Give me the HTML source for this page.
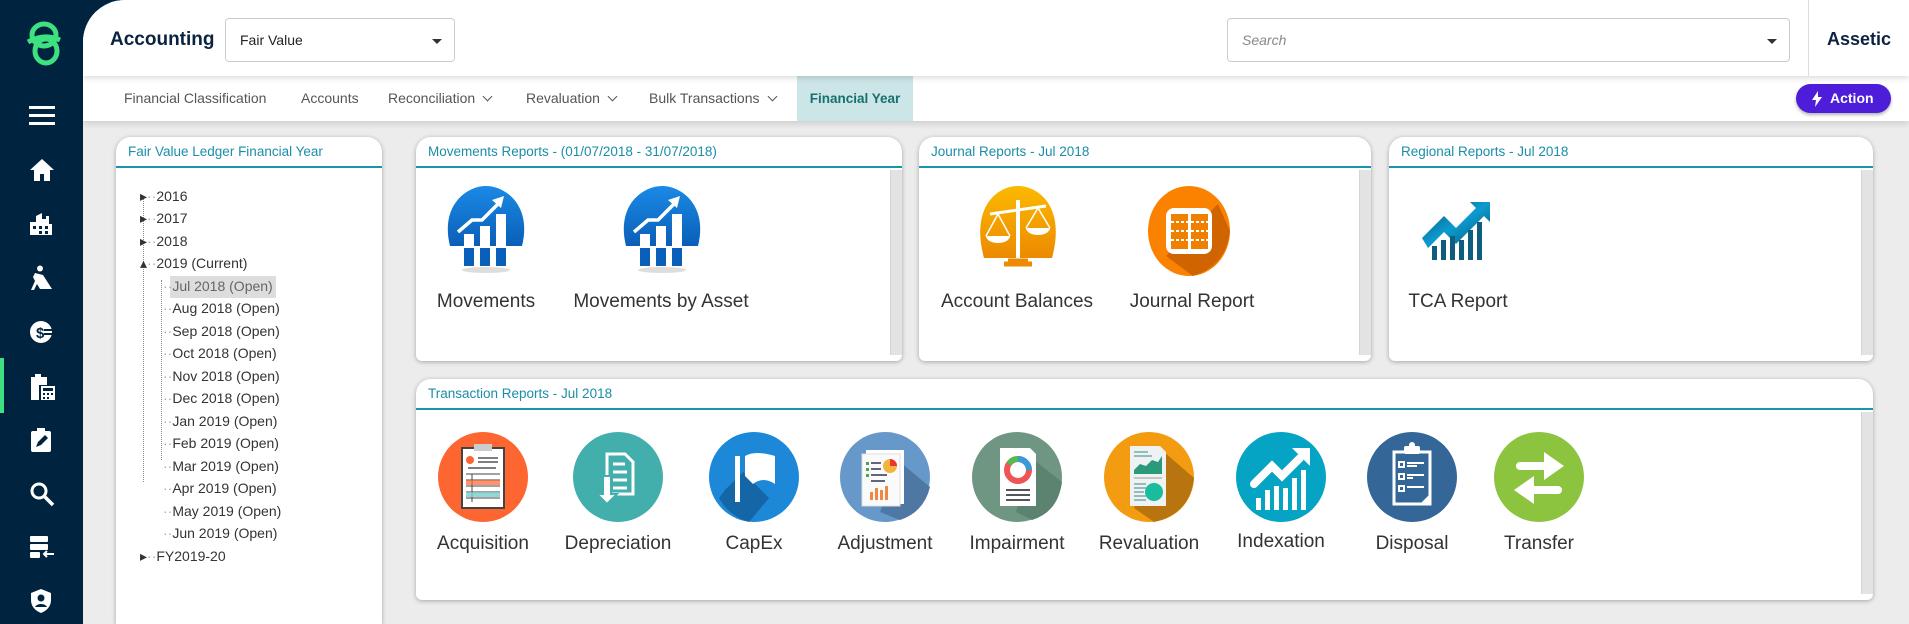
<!DOCTYPE html>
<html style="overflow:hidden;width:1909px;height:624px"><head><meta charset="utf-8"><style>
*{box-sizing:border-box;margin:0;padding:0}
body{width:1909px;height:624px;overflow:hidden;background:#002440;font-family:"Liberation Sans",sans-serif;position:relative}
.abs{position:absolute}
#main{left:83px;top:0;width:1826px;height:624px;background:#ececec;border-top-left-radius:42px;overflow:hidden}
#hdr{left:0;top:0;width:1826px;height:76px;background:#fff;box-shadow:0 2px 6px rgba(0,0,0,.15);z-index:2}
#nav{left:0;top:76px;width:1826px;height:45px;background:#fff;box-shadow:0 3px 6px rgba(0,0,0,.12);z-index:1}
.nv{position:absolute;top:0;height:45px;line-height:45px;font-size:14px;color:#555}
.chev{display:inline-block;width:7px;height:7px;border-right:1.6px solid #555;border-bottom:1.6px solid #555;transform:rotate(45deg);margin-left:9px;position:relative;top:-3px}
.panel{position:absolute;background:#fff;border-radius:15px 15px 6px 6px;box-shadow:0 1px 5px rgba(0,0,0,.3)}
.ph{height:31px;border-bottom:2px solid #1a93ab;color:#1a8ea9;font-size:13.5px;line-height:30px;padding-left:12px}
.lbl{position:absolute;font-size:19px;color:#333;white-space:nowrap;transform:translateX(-50%)}
.ic{position:absolute}
.tr{position:absolute;font-size:14px;color:#333;white-space:nowrap}
.sb{position:absolute;right:0;top:33px;width:12px;background:#e3e3e3;border-left:1px solid #d4d4d4}
</style></head><body>
<!-- sidebar -->
<svg class="abs" style="left:24px;top:20px" width="40" height="48" viewBox="0 0 40 48"><g fill="none" stroke="#3ee07f" stroke-width="5"><ellipse cx="20" cy="15" rx="12" ry="11"/><ellipse cx="22" cy="31" rx="11" ry="12"/><path d="M4 22 Q20 13 36 20"/></g></svg>
<div class="abs" style="left:29px;top:106px;width:26px;height:3px;background:#fff;box-shadow:0 8px 0 #fff,0 16px 0 #fff"></div>
<svg class="abs" style="left:29px;top:158px" width="26" height="24" viewBox="0 0 26 24"><path d="M13 1L1 12h4v11h6v-7h4v7h6V12h4z" fill="#fff"/></svg>
<svg class="abs" style="left:29px;top:212px" width="24" height="24" viewBox="0 0 24 24"><path d="M1 23V10h6V4l6-3v6h4V4h3v8h3v11z" fill="#fff"/><g fill="#002440"><rect x="4" y="14" width="3" height="3"/><rect x="10" y="14" width="3" height="3"/><rect x="16" y="14" width="3" height="3"/><rect x="10" y="19" width="3" height="3"/><rect x="16" y="19" width="3" height="3"/></g></svg>
<svg class="abs" style="left:28px;top:265px" width="26" height="26" viewBox="0 0 26 26"><circle cx="12" cy="3.5" r="3" fill="#fff"/><path d="M7 8l8 2 9 14H12l-3-5-3 6H3l4-9L5 12z" fill="#fff"/></svg>
<svg class="abs" style="left:29px;top:320px" width="24" height="24" viewBox="0 0 24 24"><circle cx="12" cy="12" r="11" fill="#fff"/><text x="7" y="18" font-size="15" font-weight="bold" fill="#002440" font-family="Liberation Sans">$</text><path d="M15 10h8M15 14h8" stroke="#002440" stroke-width="2"/></svg>
<div class="abs" style="left:0;top:358px;width:4px;height:55px;background:#3ee07f"></div>
<svg class="abs" style="left:30px;top:373px" width="26" height="28" viewBox="0 0 26 28"><path d="M1 4h16v8H9v15H1z" fill="#fff"/><rect x="5" y="1" width="6" height="4" fill="#fff"/><rect x="11" y="13" width="14" height="14" fill="#fff"/><g fill="#002440"><rect x="13" y="15" width="10" height="3"/><rect x="13" y="20" width="2" height="2"/><rect x="17" y="20" width="2" height="2"/><rect x="21" y="20" width="2" height="2"/><rect x="13" y="24" width="2" height="2"/><rect x="17" y="24" width="2" height="2"/></g></svg>
<svg class="abs" style="left:30px;top:427px" width="22" height="26" viewBox="0 0 22 26"><rect x="1" y="4" width="20" height="21" rx="2" fill="#fff"/><rect x="7" y="1" width="8" height="5" fill="#fff"/><path d="M6 20l2-5 7-7 3 3-7 7z" fill="#002440"/></svg>
<svg class="abs" style="left:29px;top:481px" width="26" height="26" viewBox="0 0 26 26"><circle cx="10" cy="10" r="7" fill="none" stroke="#fff" stroke-width="3"/><path d="M15 15l9 9" stroke="#fff" stroke-width="3.5"/></svg>
<svg class="abs" style="left:29px;top:535px" width="26" height="24" viewBox="0 0 26 24"><rect x="1" y="1" width="18" height="6" rx="1" fill="#fff"/><rect x="1" y="9" width="18" height="6" rx="1" fill="#fff"/><rect x="1" y="17" width="10" height="6" rx="1" fill="#fff"/><path d="M25 19H15M18 16l-3 3 3 3" stroke="#fff" stroke-width="2" fill="none"/></svg>
<svg class="abs" style="left:30px;top:588px" width="22" height="26" viewBox="0 0 22 26"><path d="M11 1L1 5v7c0 7 5 11 10 13 5-2 10-6 10-13V5z" fill="#fff"/><circle cx="11" cy="10" r="3.5" fill="#002440"/><path d="M5 19c2-4 10-4 12 0" fill="#002440"/></svg>

<div id="main" class="abs">
<div id="hdr" class="abs">
  <div class="abs" style="left:27px;top:29px;font-size:19px;font-weight:bold;color:#0b2340">Accounting</div>
  <div class="abs" style="left:142px;top:18px;width:230px;height:44px;border:1px solid #ccc;border-radius:4px;font-size:14px;color:#222;padding:13px 14px">Fair Value<span class="abs" style="right:12px;top:20px;border-left:5px solid transparent;border-right:5px solid transparent;border-top:5px solid #333"></span></div>
  <div class="abs" style="left:1144px;top:18px;width:563px;height:44px;border:1px solid #ccc;border-radius:4px;font-size:14px;color:#888;font-style:italic;padding:13px 14px">Search<span class="abs" style="right:12px;top:20px;border-left:5px solid transparent;border-right:5px solid transparent;border-top:5px solid #333"></span></div>
  <div class="abs" style="left:1725px;top:0;width:1px;height:76px;background:#ddd"></div>
  <div class="abs" style="left:1744px;top:29px;font-size:18px;font-weight:bold;color:#0b2340">Assetic</div>
</div>
<div id="nav" class="abs">
  <div class="nv" style="left:41px">Financial Classification</div>
  <div class="nv" style="left:218px">Accounts</div>
  <div class="nv" style="left:305px">Reconciliation<span class="chev"></span></div>
  <div class="nv" style="left:443px">Revaluation<span class="chev"></span></div>
  <div class="nv" style="left:566px">Bulk Transactions<span class="chev"></span></div>
  <div class="nv" style="left:714px;width:116px;background:#cce5e7;color:#17706f;font-weight:bold;text-align:center;font-size:13.5px">Financial Year</div>
  <div class="abs" style="left:1713px;top:8px;width:95px;height:29px;border-radius:15px;background:#4d1dd9;color:#fff;font-weight:bold;font-size:14px;line-height:29px;padding-left:34px;box-shadow:0 2px 3px rgba(0,0,0,.3)">Action<svg class="abs" style="left:16px;top:7px" width="10" height="16" viewBox="0 0 10 16"><path d="M6 0L0 9h4l-1 7 7-10H6z" fill="#fff"/></svg></div>
</div>
</div>

<!-- left tree panel -->
<div class="panel" style="left:116px;top:137px;width:266px;height:487px;border-radius:15px 15px 0 0">
  <div class="ph">Fair Value Ledger Financial Year</div>
  <div class="abs" style="left:27px;top:60px;width:0;height:285px;border-left:1px dotted #888"></div>
  <div class="abs" style="left:45px;top:143px;width:0;height:180px;border-left:1px dotted #888"></div>
</div>
<div class="tr" style="left:140px;top:188px">▸<span style="color:#aaa">··</span>2016</div>
<div class="tr" style="left:140px;top:210px">▸<span style="color:#aaa">··</span>2017</div>
<div class="tr" style="left:140px;top:233px">▸<span style="color:#aaa">··</span>2018</div>
<div class="tr" style="left:140px;top:255px">▴<span style="color:#aaa">··</span>2019 (Current)</div>
<div class="abs" style="left:170px;top:276px;width:106px;height:22px;background:#ddd"></div>
<div class="tr" style="left:163px;top:278px;color:#666"><span style="color:#aaa">··</span>Jul 2018 (Open)</div>
<div class="tr" style="left:163px;top:300px"><span style="color:#aaa">··</span>Aug 2018 (Open)</div>
<div class="tr" style="left:163px;top:323px"><span style="color:#aaa">··</span>Sep 2018 (Open)</div>
<div class="tr" style="left:163px;top:345px"><span style="color:#aaa">··</span>Oct 2018 (Open)</div>
<div class="tr" style="left:163px;top:368px"><span style="color:#aaa">··</span>Nov 2018 (Open)</div>
<div class="tr" style="left:163px;top:390px"><span style="color:#aaa">··</span>Dec 2018 (Open)</div>
<div class="tr" style="left:163px;top:413px"><span style="color:#aaa">··</span>Jan 2019 (Open)</div>
<div class="tr" style="left:163px;top:435px"><span style="color:#aaa">··</span>Feb 2019 (Open)</div>
<div class="tr" style="left:163px;top:458px"><span style="color:#aaa">··</span>Mar 2019 (Open)</div>
<div class="tr" style="left:163px;top:480px"><span style="color:#aaa">··</span>Apr 2019 (Open)</div>
<div class="tr" style="left:163px;top:503px"><span style="color:#aaa">··</span>May 2019 (Open)</div>
<div class="tr" style="left:163px;top:525px"><span style="color:#aaa">··</span>Jun 2019 (Open)</div>
<div class="tr" style="left:140px;top:548px">▸<span style="color:#aaa">··</span>FY2019-20</div>

<!-- top panels -->
<div class="panel" style="left:416px;top:137px;width:486px;height:224px"><div class="ph">Movements Reports - (01/07/2018 - 31/07/2018)</div><div class="sb" style="height:185px"></div></div>
<div class="panel" style="left:919px;top:137px;width:452px;height:224px"><div class="ph">Journal Reports - Jul 2018</div><div class="sb" style="height:185px"></div></div>
<div class="panel" style="left:1389px;top:137px;width:484px;height:224px"><div class="ph">Regional Reports - Jul 2018</div><div class="sb" style="height:185px"></div></div>
<div class="panel" style="left:416px;top:379px;width:1457px;height:221px"><div class="ph">Transaction Reports - Jul 2018</div><div class="sb" style="height:182px"></div></div>

<!-- movements icons -->
<svg class="ic" style="left:446px;top:186px" width="80" height="88" viewBox="0 0 80 88"><defs><linearGradient id="bg1" x1="0" y1="0" x2="0" y2="1"><stop offset="0" stop-color="#1a8ae6"/><stop offset="1" stop-color="#0a5fb8"/></linearGradient></defs><path d="M4 60 C-6 20 20 0 40 0 60 0 86 20 76 60z" fill="url(#bg1)"/><ellipse cx="40" cy="84" rx="24" ry="3" fill="#ddd"/><g fill="#fff"><rect x="18" y="48" width="10" height="14"/><rect x="34" y="40" width="10" height="22"/><rect x="50" y="28" width="10" height="34"/></g><g fill="#0a5fb8"><rect x="18" y="62" width="10" height="18"/><rect x="34" y="62" width="10" height="18"/><rect x="50" y="62" width="10" height="18"/></g><g fill="#fff"><rect x="28" y="62" width="6" height="18"/><rect x="44" y="62" width="6" height="18"/></g><path d="M12 46l14-12h10l16-16" stroke="#fff" stroke-width="3.5" fill="none"/><path d="M46 14l12-4-3 12z" fill="#fff"/></svg>
<svg class="ic" style="left:622px;top:186px" width="80" height="88" viewBox="0 0 80 88"><path d="M4 60 C-6 20 20 0 40 0 60 0 86 20 76 60z" fill="url(#bg1)"/><ellipse cx="40" cy="84" rx="24" ry="3" fill="#ddd"/><g fill="#fff"><rect x="18" y="48" width="10" height="14"/><rect x="34" y="40" width="10" height="22"/><rect x="50" y="28" width="10" height="34"/></g><g fill="#0a5fb8"><rect x="18" y="62" width="10" height="18"/><rect x="34" y="62" width="10" height="18"/><rect x="50" y="62" width="10" height="18"/></g><g fill="#fff"><rect x="28" y="62" width="6" height="18"/><rect x="44" y="62" width="6" height="18"/></g><path d="M12 46l14-12h10l16-16" stroke="#fff" stroke-width="3.5" fill="none"/><path d="M46 14l12-4-3 12z" fill="#fff"/></svg>
<div class="lbl" style="left:486px;top:291px">Movements</div>
<div class="lbl" style="left:661px;top:291px">Movements by Asset</div>
<!-- account balances -->
<svg class="ic" style="left:978px;top:186px" width="80" height="88" viewBox="0 0 80 88"><defs><linearGradient id="og" x1="0" y1="0" x2="0" y2="1"><stop offset="0" stop-color="#fcb900"/><stop offset="1" stop-color="#ec8a00"/></linearGradient></defs><path d="M6 72 C-8 20 20 0 40 0 60 0 88 20 74 72z" fill="url(#og)"/><rect x="38" y="14" width="4" height="60" fill="#fff"/><path d="M12 28l56-8" stroke="#fff" stroke-width="3"/><path d="M8 50a12 7 0 0 0 24 0zM48 42a12 7 0 0 0 24 0z" fill="#fff"/><path d="M20 28l-12 22M20 28l12 22M60 22l-12 20M60 22l12 20" stroke="#fff" stroke-width="1.5"/><path d="M26 78h28" stroke="#ec8a00" stroke-width="5"/><path d="M30 74h20" stroke="#ec8a00" stroke-width="3"/></svg>
<div class="lbl" style="left:1017px;top:291px">Account Balances</div>
<!-- journal report -->
<svg class="ic" style="left:1148px;top:186px" width="82" height="90" viewBox="0 0 82 90"><ellipse cx="41" cy="45" rx="41" ry="45" fill="#fb8200"/><path d="M18 70L70 18 82 45 Q78 80 45 90z" fill="#d06400"/><rect x="18" y="22" width="46" height="46" rx="8" fill="#fff"/><rect x="23" y="28" width="17" height="35" fill="#f08000"/><rect x="43" y="28" width="17" height="35" fill="#f08000"/><g stroke="#fff" stroke-width="2" stroke-dasharray="3 2"><path d="M23 36h37M23 45h37M23 54h37"/></g></svg>
<div class="lbl" style="left:1192px;top:291px">Journal Report</div>
<!-- TCA -->
<svg class="ic" style="left:1418px;top:190px" width="76" height="72" viewBox="0 0 76 72"><defs><linearGradient id="tg" x1="0" y1="0" x2="1" y2="1"><stop offset="0" stop-color="#0a4d6e"/><stop offset=".5" stop-color="#0b9bd0"/><stop offset="1" stop-color="#0a4d6e"/></linearGradient></defs><path d="M4 48l22-22 12 12 20-20-6-6h20v20l-6-6-28 28-12-12-16 16z" fill="url(#tg)"/><g fill="#0e5c7e"><rect x="14" y="56" width="5" height="14"/><rect x="23" y="50" width="5" height="20"/><rect x="32" y="46" width="5" height="24"/><rect x="41" y="50" width="5" height="20"/><rect x="50" y="40" width="5" height="30"/><rect x="59" y="32" width="5" height="38"/></g></svg>
<div class="lbl" style="left:1458px;top:291px">TCA Report</div>

<!-- transaction icons -->
<svg class="ic" style="left:438px;top:432px" width="90" height="90" viewBox="0 0 90 90"><circle cx="45" cy="45" r="45" fill="#fd6531"/><rect x="24" y="16" width="42" height="60" fill="#fff" stroke="#444" stroke-width="2"/><rect x="36" y="12" width="18" height="7" fill="#ccc"/><circle cx="32" cy="28" r="4" fill="#fd6531"/><path d="M40 26h20M40 30h20M30 36h28" stroke="#555" stroke-width="1.5"/><g stroke="#444" stroke-width="1"><path d="M28 42h34M28 48h34M28 54h34M28 60h34M28 66h34M34 42v28"/></g><rect x="28" y="48" width="34" height="5" fill="#fd6531" opacity=".7"/><rect x="28" y="60" width="34" height="5" fill="#7cc" opacity=".8"/></svg>
<svg class="ic" style="left:573px;top:432px" width="90" height="90" viewBox="0 0 90 90"><circle cx="45" cy="45" r="45" fill="#42afad"/><path d="M34 22h18l8 8v32H34z" fill="none" stroke="#fff" stroke-width="3"/><path d="M40 32h12M40 40h14M40 48h14M40 56h14" stroke="#fff" stroke-width="3"/><path d="M30 44v18h-6l10 10 10-10h-6V44z" fill="#fff" stroke="#42afad" stroke-width="2"/></svg>
<svg class="ic" style="left:709px;top:432px" width="90" height="90" viewBox="0 0 90 90"><circle cx="45" cy="45" r="45" fill="#1e88d8"/><path d="M16 58L34 40 60 66 40 90Q20 84 10 66z" fill="#125e9a" opacity=".8"/><rect x="26" y="24" width="5" height="46" fill="#fff"/><path d="M36 24q10-6 30 0v28q-12-8-22 0l-8-8z" fill="#fff"/></svg>
<svg class="ic" style="left:840px;top:432px" width="90" height="90" viewBox="0 0 90 90"><circle cx="45" cy="45" r="45" fill="#6699c9"/><path d="M60 30L90 55 Q84 80 60 88L40 80z" fill="#4f77a3"/><rect x="26" y="18" width="38" height="54" fill="#fff"/><rect x="22" y="22" width="38" height="52" fill="#fafafa" stroke="#ddd"/><circle cx="50" cy="34" r="7" fill="#f2b43a"/><path d="M50 27v7h7a7 7 0 0 0-7-7z" fill="#e33"/><g fill="#4a4"><rect x="26" y="30" width="3" height="3"/><rect x="26" y="36" width="3" height="3"/><rect x="26" y="42" width="3" height="3"/></g><path d="M31 31h10M31 37h10M31 43h16M31 49h14" stroke="#335" stroke-width="1.5"/><g fill="#e84"><rect x="30" y="60" width="3" height="8"/><rect x="35" y="56" width="3" height="12"/><rect x="40" y="58" width="3" height="10"/><rect x="45" y="54" width="3" height="14"/></g></svg>
<svg class="ic" style="left:972px;top:432px" width="90" height="90" viewBox="0 0 90 90"><circle cx="45" cy="45" r="45" fill="#6e9683"/><path d="M62 28L90 50 Q86 80 60 88L44 80z" fill="#5c8270"/><path d="M28 16h30l6 6v52H28z" fill="#fff"/><circle cx="46" cy="38" r="11" fill="none" stroke="#e55" stroke-width="6"/><path d="M46 27a11 11 0 0 1 11 11" stroke="#3a9ad9" stroke-width="6" fill="none"/><path d="M37 32a11 11 0 0 1 9-5" stroke="#5b5" stroke-width="6" fill="none"/><path d="M34 58h24M34 63h24M34 68h24" stroke="#555" stroke-width="2"/></svg>
<svg class="ic" style="left:1104px;top:432px" width="90" height="90" viewBox="0 0 90 90"><circle cx="45" cy="45" r="45" fill="#f39c12"/><path d="M60 20L90 46Q86 82 50 90L30 76z" fill="#b8740e"/><path d="M26 14h30l6 6v54H26z" fill="#eef2f2"/><path d="M30 20h14M30 24h18" stroke="#7aa" stroke-width="1.5"/><path d="M30 38l6-6 6 2 6-6 6 2 4-6v18H30z" fill="#2a9a7a"/><path d="M30 46h28" stroke="#999"/><circle cx="50" cy="60" r="9" fill="#1abc9c"/><path d="M30 52h12M30 56h12M30 60h10M30 64h12M30 68h12" stroke="#7aa" stroke-width="1.5"/></svg>
<svg class="ic" style="left:1236px;top:432px" width="90" height="90" viewBox="0 0 90 90"><circle cx="45" cy="45" r="45" fill="#05a3c4"/><path d="M18 52l18-18 10 10 18-18" stroke="#fff" stroke-width="8" fill="none" stroke-linecap="round"/><path d="M56 16h18v18z" fill="#fff"/><g fill="#fff"><rect x="20" y="66" width="5" height="12"/><rect x="29" y="58" width="5" height="20"/><rect x="38" y="54" width="5" height="24"/><rect x="47" y="56" width="5" height="22"/><rect x="56" y="46" width="5" height="32"/><rect x="65" y="38" width="5" height="40"/></g></svg>
<svg class="ic" style="left:1367px;top:432px" width="90" height="90" viewBox="0 0 90 90"><circle cx="45" cy="45" r="45" fill="#346797"/><rect x="27" y="20" width="36" height="52" fill="none" stroke="#fff" stroke-width="3"/><rect x="37" y="14" width="16" height="8" rx="2" fill="#fff"/><circle cx="45" cy="13" r="3" fill="#fff"/><g stroke="#fff" stroke-width="2" fill="none"><rect x="32" y="30" width="5" height="5"/><rect x="32" y="42" width="5" height="5"/><rect x="32" y="54" width="5" height="5"/><path d="M40 31h17M40 34h10M40 43h17M40 46h6M40 55h17"/></g><path d="M53 72l10-10v10z" fill="#fff"/></svg>
<svg class="ic" style="left:1494px;top:432px" width="90" height="90" viewBox="0 0 90 90"><circle cx="45" cy="45" r="45" fill="#8cc43f"/><path d="M26 30h24v-10l20 14-20 14V38H26a4 4 0 0 1 0-8z" fill="#fff"/><path d="M64 54H40V44L20 58l20 14V62h24a4 4 0 0 0 0-8z" fill="#fff"/></svg>
<div class="lbl" style="left:483px;top:533px">Acquisition</div>
<div class="lbl" style="left:618px;top:533px">Depreciation</div>
<div class="lbl" style="left:754px;top:533px">CapEx</div>
<div class="lbl" style="left:885px;top:533px">Adjustment</div>
<div class="lbl" style="left:1017px;top:533px">Impairment</div>
<div class="lbl" style="left:1149px;top:533px">Revaluation</div>
<div class="lbl" style="left:1281px;top:531px">Indexation</div>
<div class="lbl" style="left:1412px;top:533px">Disposal</div>
<div class="lbl" style="left:1539px;top:533px">Transfer</div>
</body></html>
